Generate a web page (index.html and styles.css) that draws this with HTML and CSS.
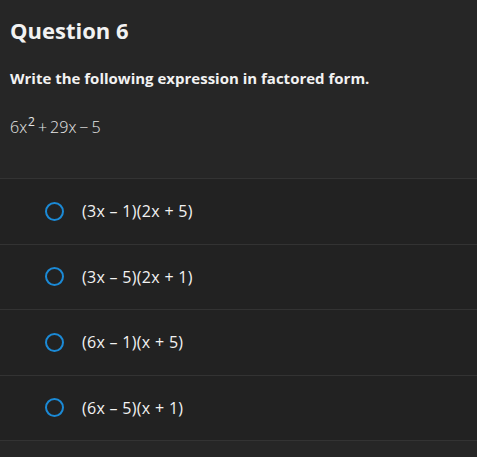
FILE: index.html
```html
<!DOCTYPE html>
<html lang="en">
<head>
    <meta charset="UTF-8">
    <title>Question 6</title>
    <link rel="stylesheet" href="styles.css">
</head>
<body>
    <div class="question">
        <h2 class="title">Question 6</h2>
        <p class="prompt">Write the following expression in factored form.</p>
        <p class="expr">6x<sup>2</sup><span class="op">+</span>29x<span class="op">&minus;</span>5</p>
    </div>
    <ul class="answers">
        <li class="answer"><span class="radio"></span><span class="label">(3x &ndash; 1)(2x + 5)</span></li>
        <li class="answer"><span class="radio"></span><span class="label">(3x &ndash; 5)(2x + 1)</span></li>
        <li class="answer"><span class="radio"></span><span class="label">(6x &ndash; 1)(x + 5)</span></li>
        <li class="answer"><span class="radio"></span><span class="label">(6x &ndash; 5)(x + 1)</span></li>
    </ul>
</body>
</html>
```

FILE: styles.css
```css
body {
    margin: 0;
    background-color: #262626;
    color: #f2f2f2;
    font-family: "Open Sans", "Liberation Sans", sans-serif;
}

.question {
    padding: 16px 10px 0 10px;
    height: 162px;
    border-bottom: 1px solid #333333;
}

.title {
    margin: 0;
    font-size: 22px;
    font-weight: 700;
    line-height: 28px;
}

.prompt {
    margin: 24px 0 0 0;
    font-size: 15px;
    font-weight: 700;
    line-height: 20px;
}

.expr {
    margin: 29px 0 0 0;
    font-size: 16px;
    font-weight: 300;
    line-height: 20px;
    color: #e6e6e6;
}

.expr sup {
    font-size: 12px;
    font-weight: 400;
    line-height: 0;
    margin-left: 1px;
    vertical-align: 7px;
}

.expr .op {
    margin: 0 3px;
}

.answers {
    list-style: none;
    margin: 0;
    padding: 0;
    background-color: #222222;
}

.answer {
    display: flex;
    align-items: center;
    height: 64.5px;
    padding-left: 45px;
    border-bottom: 1px solid #333333;
}

.radio {
    width: 15px;
    height: 15px;
    border: 2px solid #1b8ad6;
    border-radius: 50%;
}

.label {
    margin-left: 18px;
    font-size: 16px;
    letter-spacing: 0.3px;
}
```
